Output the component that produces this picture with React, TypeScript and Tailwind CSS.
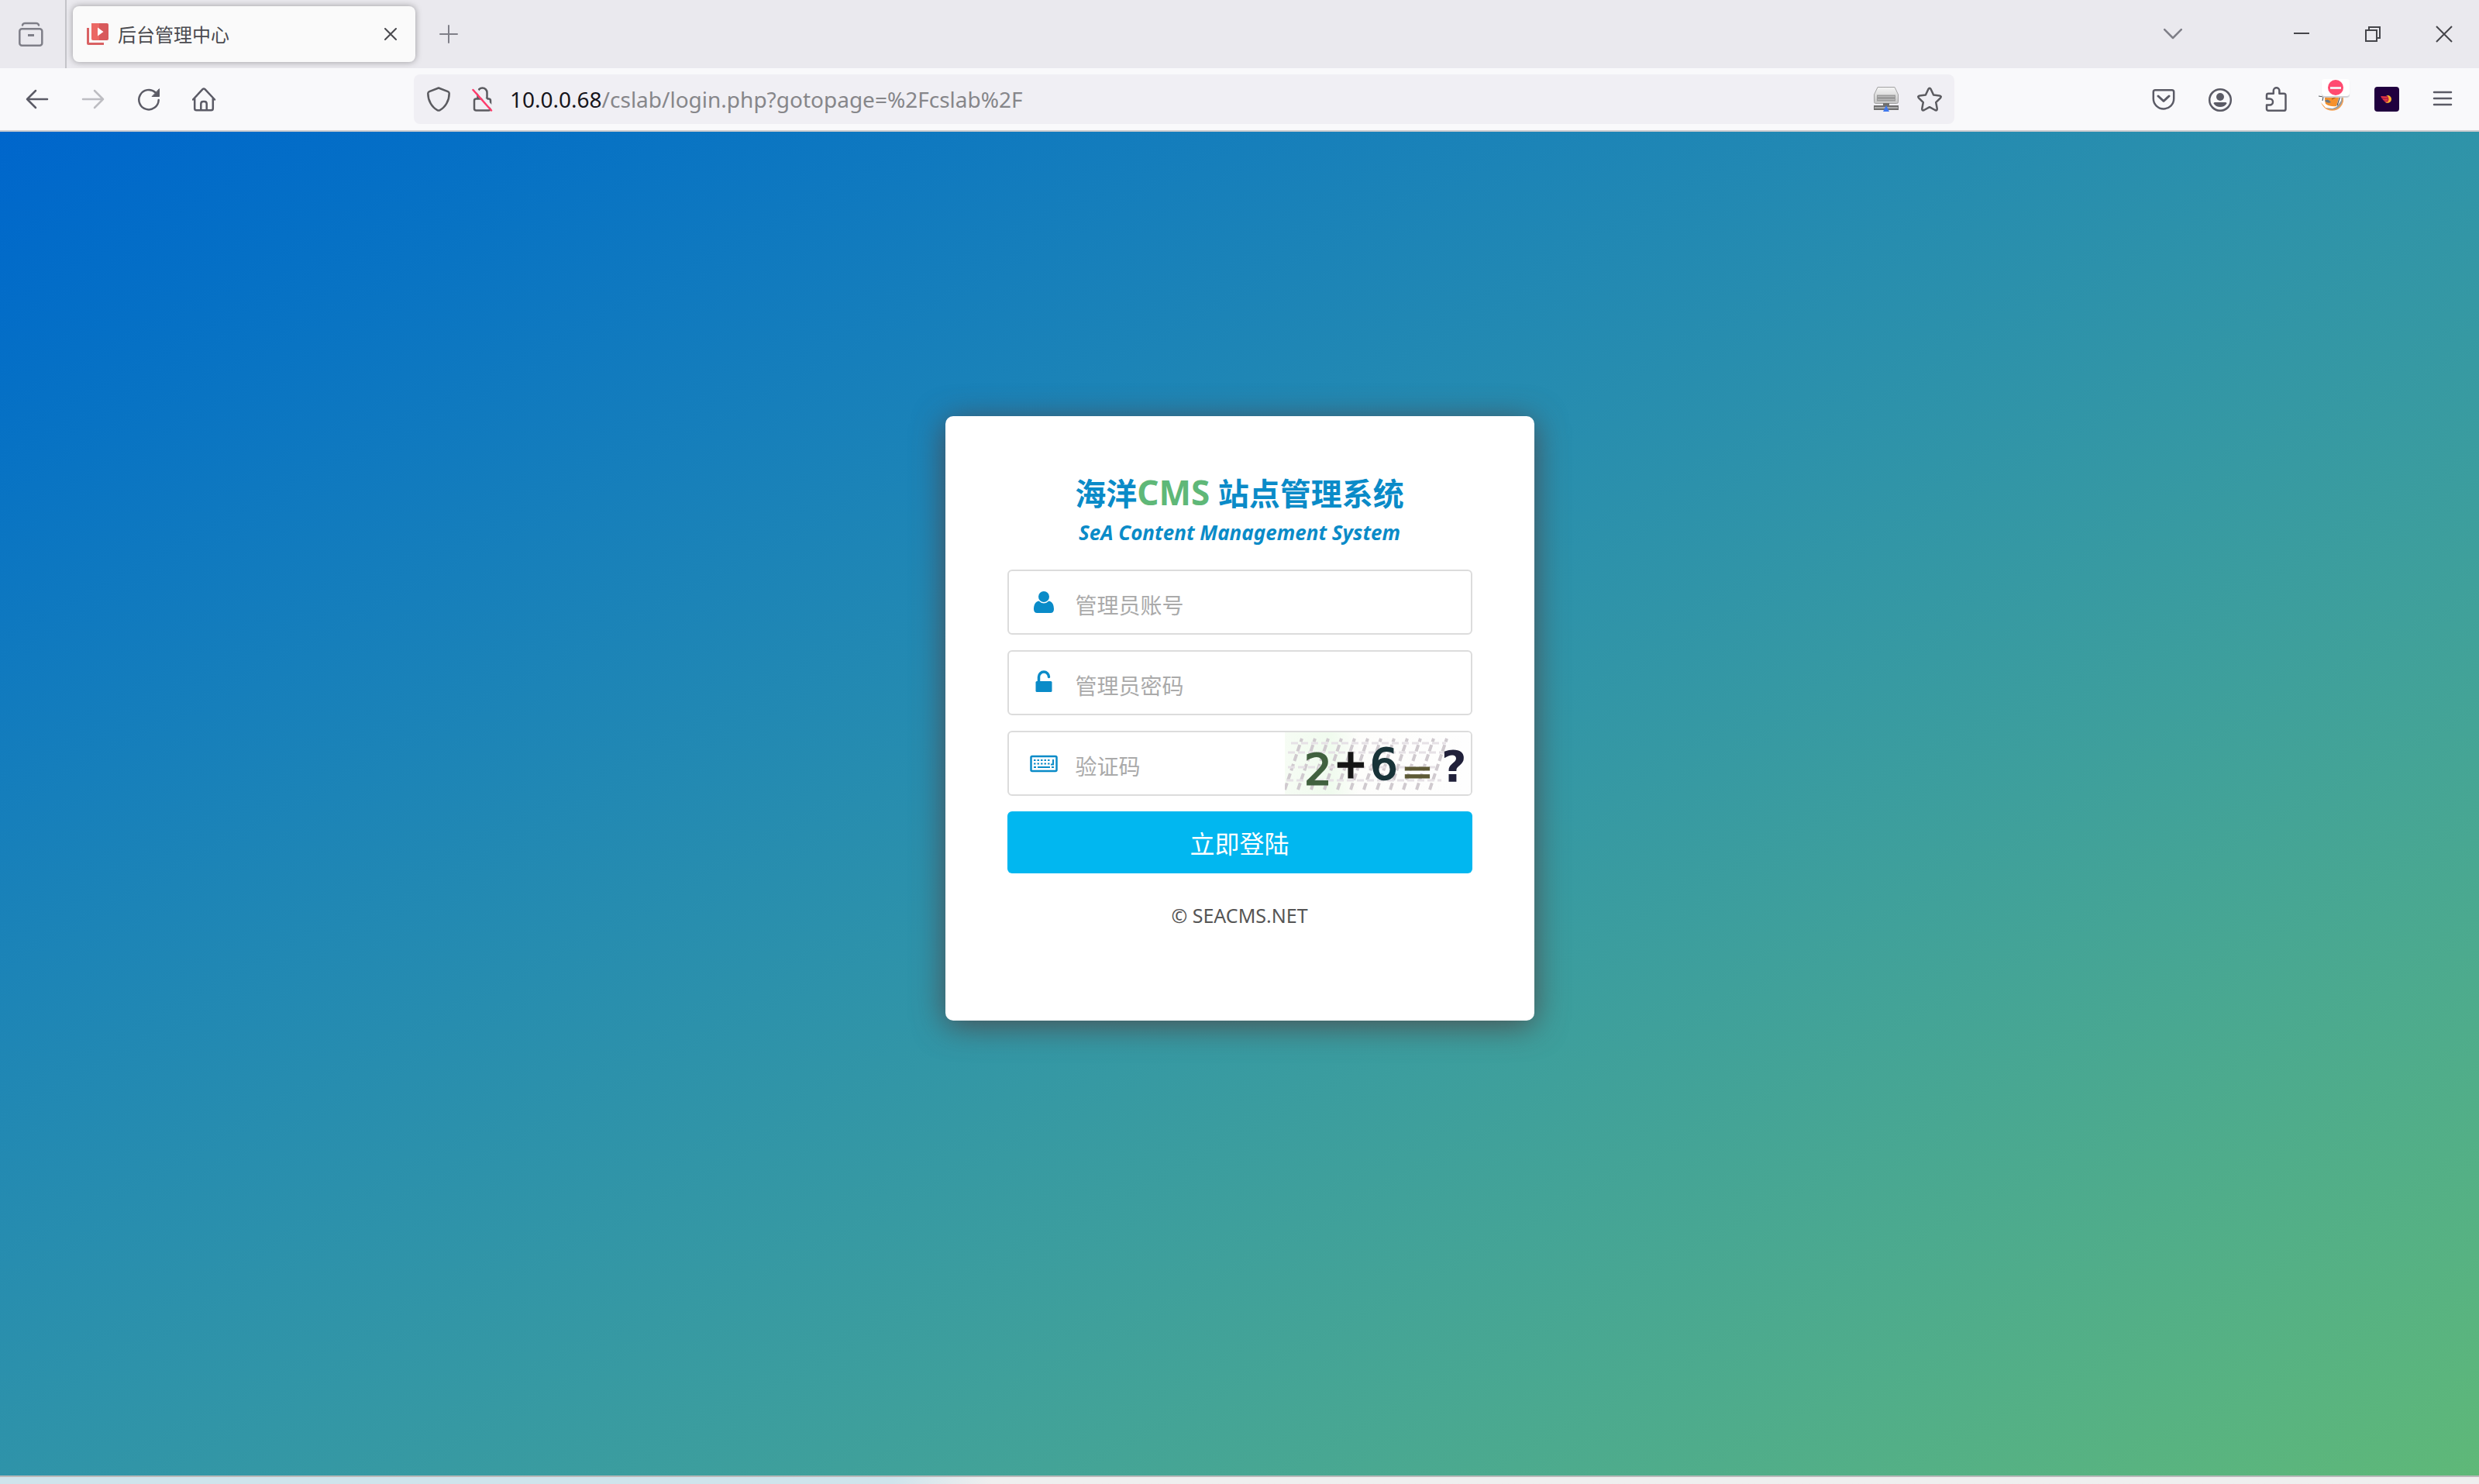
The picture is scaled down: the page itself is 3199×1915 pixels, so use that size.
import type { ReactNode } from 'react';

type IconProps = {
    label: string;
    children: ReactNode;
    className?: string;
};

function IconButton({ label, children, className = '' }: IconProps) {
    return (
        <button type="button" aria-label={label} className={`flex h-16 w-16 items-center justify-center ${className}`}>
            {children}
        </button>
    );
}

const stroke = {
    fill: 'none',
    stroke: 'currentColor',
    strokeWidth: 2.5,
    strokeLinecap: 'round' as const,
    strokeLinejoin: 'round' as const,
};

function TabStrip() {
    return (
        <div className="flex h-[88px] items-center bg-[#eae9ee] text-[#7f7f88]">
            <div className="flex h-full w-[86px] items-center justify-center border-r-2 border-[#c4c4c9] pr-1">
                <button type="button" aria-label="Firefox View">
                    <svg className="h-8 w-8" viewBox="0 0 32 32" {...stroke}>
                        <path d="M5 4.500Q5.500 2 8.500 2h14Q25.500 2 26 4.500" />
                        <rect x="1.300" y="9.300" width="29" height="21.400" rx="3" />
                        <path d="M12 17.500h8" strokeWidth="3" strokeLinecap="butt" />
                    </svg>
                </button>
            </div>

            <div className="ml-2 flex h-[72px] w-[442px] items-center rounded-lg bg-[#fafafa] pl-[18px] pr-4 shadow-[0_0_8px_rgba(0,0,0,0.35)]">
                <svg className="h-7 w-7" viewBox="0 0 28 28">
                    <path d="M6 0h10v22H8q-2 0-2-2z" fill="#eb6864" />
                    <path d="M16 0h10q2 0 2 2v18q0 2-2 2H16z" fill="#d85a5c" />
                    <path d="M0 6h3v19h19v3H2q-2 0-2-2z" fill="#d96163" />
                    <path d="M14 5.500l7.500 5.500-7.500 5.500z" fill="#fff" />
                </svg>
                <span className="ml-3 flex-1 pt-0.5 text-[24px] leading-8 text-[#4a4a4f]">后台管理中心</span>
                <button type="button" aria-label="Close tab" className="flex h-8 w-8 items-center justify-center text-[#4a4a4f]">
                    <svg className="h-4 w-4" viewBox="0 0 16 16" {...stroke} strokeWidth="2">
                        <path d="M1 1l14 14M15 1L1 15" />
                    </svg>
                </button>
            </div>

            <button type="button" aria-label="New tab" className="ml-[31px]">
                <svg className="h-6 w-6" viewBox="0 0 24 24" {...stroke} strokeWidth="2">
                    <path d="M12 1v22M1 12h22" />
                </svg>
            </button>

            <button type="button" aria-label="List all tabs" className="ml-auto">
                <svg className="h-6 w-6" viewBox="0 0 24 24" {...stroke}>
                    <path d="M1.200 6.200L12 17 22.800 6.200" />
                </svg>
            </button>
            <div className="ml-[108px] flex text-[#45454a]">
                <button type="button" aria-label="Minimize" className="flex h-[88px] w-[92px] items-center justify-center">
                    <svg className="h-5 w-5" viewBox="0 0 20 20">
                        <path d="M0 9h20" stroke="currentColor" strokeWidth="2" />
                    </svg>
                </button>
                <button type="button" aria-label="Restore" className="flex h-[88px] w-[92px] items-center justify-center">
                    <svg className="h-5 w-5" viewBox="0 0 20 20" fill="none" stroke="currentColor" strokeWidth="2">
                        <path d="M1 5h14v14H1zM5 5V1h14v14h-4" />
                    </svg>
                </button>
                <button type="button" aria-label="Close" className="flex h-[88px] w-[91px] items-center justify-center">
                    <svg className="h-[22px] w-[22px]" viewBox="0 0 22 22" stroke="currentColor" strokeWidth="2">
                        <path d="M1 1l20 20M21 1L1 21" />
                    </svg>
                </button>
            </div>
        </div>
    );
}

function Toolbar() {
    return (
        <div className="flex h-[82px] items-center border-b-2 border-[#cccccf] bg-[#f9f9fb] text-[#5b5b66]">
            <div className="flex w-[534px] gap-2 pl-4">
                <IconButton label="Back">
                    <svg className="h-8 w-8" viewBox="0 0 32 32" {...stroke}>
                        <path d="M29 16H3M14 5L3 16l11 11" />
                    </svg>
                </IconButton>
                <IconButton label="Forward" className="text-[#bdbdc2]">
                    <svg className="h-8 w-8" viewBox="0 0 32 32" {...stroke}>
                        <path d="M3 16h26M18 5l11 11-11 11" />
                    </svg>
                </IconButton>
                <IconButton label="Reload">
                    <svg className="h-8 w-8" viewBox="0 0 32 32" {...stroke}>
                        <path d="M28.700 17A12.700 12.700 0 1 1 24.500 7.200" />
                        <path d="M29.500 3v9.500H20.500z" fill="currentColor" strokeWidth="1" />
                    </svg>
                </IconButton>
                <IconButton label="Home">
                    <svg className="h-8 w-8" viewBox="0 0 32 32" {...stroke}>
                        <path d="M1 16.500L13.500 3.200q1.500-1.400 3 0L29 16.500M3.200 14.500v13.500q0 2.300 2.300 2.300h19q2.300 0 2.300-2.300V14.500" />
                        <path d="M11.300 29.500V22q0-3 3-3h1.400q3 0 3 3v7.500" />
                    </svg>
                </IconButton>
            </div>

            <div className="flex h-16 w-[1988px] shrink items-center rounded-lg bg-[#f0eff4] px-4 text-[#5b5b60]">
                <button type="button" aria-label="Tracking protection">
                    <svg className="h-8 w-8" viewBox="0 0 32 32" {...stroke}>
                        <path d="M16 1.500l12 4.600q1.700.7 1.700 2.500c0 9.400-5 17.800-12 21.500q-1.700.8-3.400 0C7.300 26.400 2.300 18 2.300 8.600q0-1.800 1.700-2.500z" />
                    </svg>
                </button>
                <button type="button" aria-label="Connection is not secure" className="ml-6">
                    <svg className="h-8 w-8" viewBox="0 0 32 32" {...stroke}>
                        <rect x="6" y="15.500" width="21" height="15" rx="2.500" />
                        <path d="M10.500 15V7.500a6 6 0 0 1 12 0V15" />
                        <path d="M6.500 1.500L31 29" stroke="#f0eff4" strokeWidth="4" />
                        <path d="M4.500 4L28 30.500" stroke="#ff3b6b" />
                    </svg>
                </button>
                <div className="ml-5 flex-1 text-[28px] leading-10 text-[#86868a]">
                    <span className="text-[#15141a]">10.0.0.68</span>/cslab/login.php?gotopage=%2Fcslab%2F
                </div>
                <svg className="h-8 w-8" viewBox="0 0 32 32">
                    <defs>
                        <linearGradient id="drive" x1="0" y1="0" x2="0" y2="1">
                            <stop offset="0" stopColor="#f5f5f5" />
                            <stop offset="1" stopColor="#c4c4c4" />
                        </linearGradient>
                    </defs>
                    <path d="M5 .5h22l4.500 9.500v9.500q0 2-2 2h-27q-2 0-2-2V10z" fill="url(#drive)" stroke="#a2a2a2" />
                    <path d="M4 10.500h24v8H4z" fill="#9a9a9a" />
                    <path d="M5 12.500h22M5 16.500h22" stroke="#bcbcbc" />
                    <path d="M0 24h32v6H0zM12 21h8v5h-8z" fill="#6f6f6f" />
                    <path d="M1 27h30" stroke="#aaa" strokeWidth="2" />
                    <path d="M16 24l4 8h-8z" fill="#3f78ee" />
                </svg>
                <button type="button" aria-label="Bookmark this page" className="ml-6">
                    <svg className="h-8 w-8" viewBox="0 0 32 32" {...stroke}>
                        <path d="M14.300 3.200q1.700-3 3.400 0l3.400 7.300 7.700.9q3.300.6 1 3.200l-5.600 5.500 1.500 8q.2 3.200-2.700 1.900L16 26.200 9 30q-2.900 1.300-2.700-1.900l1.500-8-5.600-5.500q-2.300-2.600 1-3.200l7.700-.9z" />
                    </svg>
                </button>
            </div>

            <div className="ml-auto flex gap-2 pr-[15px]">
                <IconButton label="Pocket">
                    <svg className="h-8 w-8" viewBox="0 0 32 32" {...stroke}>
                        <path d="M5.300 4.200h21.400q2.500 0 2.500 2.500v8.500a13.200 13.200 0 0 1-26.400 0V6.700q0-2.500 2.500-2.500z" />
                        <path d="M9 12l7 6.500 7-6.500" strokeWidth="3" />
                    </svg>
                </IconButton>
                <IconButton label="Account">
                    <svg className="h-8 w-8" viewBox="0 0 32 32" {...stroke}>
                        <circle cx="17" cy="17" r="13.800" />
                        <circle cx="17" cy="13" r="5" fill="currentColor" stroke="none" />
                        <path d="M8.500 21.500q0-1.500 1.500-1.500h14q1.500 0 1.500 1.500-3 4.500-8.500 4.500t-8.500-4.500z" fill="currentColor" stroke="none" />
                    </svg>
                </IconButton>
                <IconButton label="Extensions">
                    <svg className="h-8 w-8" viewBox="0 0 32 32" {...stroke}>
                        <path d="M5 15.500V11q0-2.200 2.200-2.200h6.600V5a3.800 3.800 0 0 1 7.600 0v3.800h5.800q2.300 0 2.300 2.300v17.400q0 2.300-2.300 2.300H7.200Q5 30.800 5 28.500V23.500h4a4 4 0 0 0 0-8z" />
                    </svg>
                </IconButton>
                <IconButton label="FoxyProxy" className="relative">
                    <svg className="h-8 w-8" viewBox="0 0 32 32">
                        <circle cx="17.500" cy="16" r="14" fill="#999c9e" stroke="#f7a050" strokeWidth="1.500" />
                        <path d="M0 11l12-3h18l-1 10-6 8-5 2-9-1-6-7z" fill="#fff" />
                        <path d="M9 8h16l2 3-4 14q-8 1-14-3-2-7 0-14z" fill="#f6912c" />
                        <path d="M0 12l6 1-1 5M28 12l-4 12" fill="none" stroke="#50555a" strokeWidth="1.200" />
                        <path d="M8 18q4-4 8 2-5 2-8-2z" fill="#6d7780" />
                        <path d="M17 16l6-3M9 14l5-1" stroke="#a4571b" strokeWidth="1.200" />
                    </svg>
                    <span className="absolute top-1.5 right-2 flex h-[22px] w-9 items-center justify-center rounded bg-white shadow-[0_2px_1px_#d0d0d4]">
                        <svg className="h-5 w-5" viewBox="0 0 20 20">
                            <circle cx="10" cy="10" r="10" fill="#ff4a70" />
                            <path d="M3 10.500h14" stroke="#f6e8ee" strokeWidth="3" />
                        </svg>
                    </span>
                </IconButton>
                <IconButton label="Burp">
                    <svg className="h-8 w-8" viewBox="0 0 32 32">
                        <rect width="32" height="32" rx="4" fill="#20003f" />
                        <path d="M17 11a5 5 0 0 1 0 10q-2 0-3-1 4-4 1-8z" fill="#ffb02e" />
                        <path d="M8 12h9q3 4 0 8-4 0-5.500-2.500Q9 15 8 12z" fill="#b01648" />
                        <path d="M9 13l8 1M11 16l6 .5M13 18l5 .5" stroke="#f0503c" />
                    </svg>
                </IconButton>
                <IconButton label="Menu">
                    <svg className="h-8 w-8" viewBox="0 0 32 32" {...stroke}>
                        <path d="M5 7h22M5 15h22M5 23h22" />
                    </svg>
                </IconButton>
            </div>
        </div>
    );
}

function UserIcon() {
    return (
        <svg className="h-7 w-9" viewBox="0 0 36 28" fill="currentColor">
            <ellipse cx="18" cy="7" rx="7" ry="7" />
            <path d="M11.500 12.500Q14.500 15.500 18 15.500t6.500-3C29 13 31 18 31 23q0 5-4.500 5h-17Q5 28 5 23c0-5 2-10 6.500-10.500z" />
        </svg>
    );
}

function UnlockIcon() {
    return (
        <svg className="h-8 w-9" viewBox="0 0 36 32" fill="currentColor">
            <rect x="7.500" y="14" width="21" height="14" rx="1.500" />
            <path d="M11.500 15V8.500a6.500 6.500 0 0 1 13 0" fill="none" stroke="currentColor" strokeWidth="3.500" strokeLinecap="round" />
        </svg>
    );
}

function KeyboardIcon() {
    return (
        <svg className="h-7 w-9" viewBox="0 0 36 28" fill="none" stroke="currentColor" strokeWidth="2">
            <rect x="1.500" y="5" width="33" height="19" rx="1.500" strokeWidth="2.500" />
            <path d="M5 10h22M5 14.500h22" strokeDasharray="2.500 2" />
            <path d="M30 9v6.500h-3M5 19h3M10 19h16M28 19h3" />
        </svg>
    );
}

function Captcha() {
    const columns = [0, 1, 2, 3, 4, 5, 6, 7, 8, 9, 10, 11];

    return (
        <svg className="h-20 w-60" viewBox="0 0 240 80" fontFamily="DejaVu Sans" fontSize="56" role="img" aria-label="2+6=?">
            <defs>
                <linearGradient id="paper">
                    <stop offset="0" stopColor="#f6fcf4" />
                    <stop offset="0.25" stopColor="#f0fbee" />
                    <stop offset="0.4" stopColor="#fdfdfb" />
                    <stop offset="1" stopColor="#fefefe" />
                </linearGradient>
            </defs>
            <rect width="240" height="80" fill="url(#paper)" />
            <g stroke="#d0cacf" strokeWidth="4" strokeDasharray="9 4">
                {columns.map((n) => (
                    <path key={n} d={`M${n * 17} 74l22-66`} />
                ))}
                <path d="M8 14h200M4 26h205M4 45h190M2 62h200" stroke="#e6e1e6" strokeWidth="3" />
            </g>
            <text x="25" y="67" fill="#41613f" stroke="#41613f" strokeWidth="2">2</text>
            <text x="64" y="58" fontSize="50" fill="#161616" stroke="#161616" strokeWidth="3">+</text>
            <text x="110" y="60" fill="#183338" stroke="#183338" strokeWidth="2">6</text>
            <text x="150" y="68" fontSize="50" fill="#5d5a35" stroke="#5d5a35">=</text>
            <text x="202" y="63" fontWeight="bold" fill="#20203a">?</text>
        </svg>
    );
}

type FieldProps = {
    id: string;
    type: string;
    placeholder: string;
    icon: ReactNode;
    children?: ReactNode;
};

function Field({ id, type, placeholder, icon, children }: FieldProps) {
    return (
        <div className="flex h-[84px] items-center overflow-hidden rounded-md border-2 border-[#dcdcdc] bg-white">
            <label htmlFor={id} aria-label={placeholder} className="pl-[27px] text-[#0a8bc8]">{icon}</label>
            <input
                id={id}
                type={type}
                placeholder={placeholder}
                className="h-full min-w-0 flex-1 pt-2 pl-[23px] text-[28px] outline-none placeholder:text-[#aaaaaa]"
            />
            {children}
        </div>
    );
}

function LoginCard() {
    return (
        <form className="h-[780px] w-[760px] rounded-[10px] bg-white px-20 pt-[72px] text-center shadow-[0_6px_40px_rgba(80,60,60,0.8)]">
            <h1 className="text-[40px] leading-[56px] font-bold text-[#0a8bc8]">
                海洋<span className="text-[44px] leading-none text-[#5fb878]">CMS</span> 站点管理系统
            </h1>
            <p className="text-[26px] leading-[44px] font-bold text-[#0a8bc8] italic">SeA Content Management System</p>

            <div className="mt-[26px] flex flex-col gap-5">
                <Field id="userid" type="text" placeholder="管理员账号" icon={<UserIcon />} />
                <Field id="pwd" type="password" placeholder="管理员密码" icon={<UnlockIcon />} />
                <Field id="validate" type="text" placeholder="验证码" icon={<KeyboardIcon />}>
                    <Captcha />
                </Field>
                <button type="submit" className="h-20 rounded-md bg-[#01b7f0] pt-1 text-[32px] text-white">立即登陆</button>
            </div>

            <p className="mt-9 text-[25px] leading-9 text-[#555555]">© SEACMS.NET</p>
        </form>
    );
}

export default function App() {
    return (
        <div className="flex min-h-screen flex-col font-['Noto_Sans','Noto_Sans_CJK_SC',sans-serif]">
            <TabStrip />
            <Toolbar />
            <main className="flex flex-1 items-start justify-center bg-linear-to-br from-[#0066cc] to-[#5fb878] pt-[367px]">
                <LoginCard />
            </main>
            <footer className="h-[11px] border-t-2 border-[#b8b8b8] bg-linear-to-r from-[#cfe4ec] from-36% to-[#efefef] to-40%" />
        </div>
    );
}
